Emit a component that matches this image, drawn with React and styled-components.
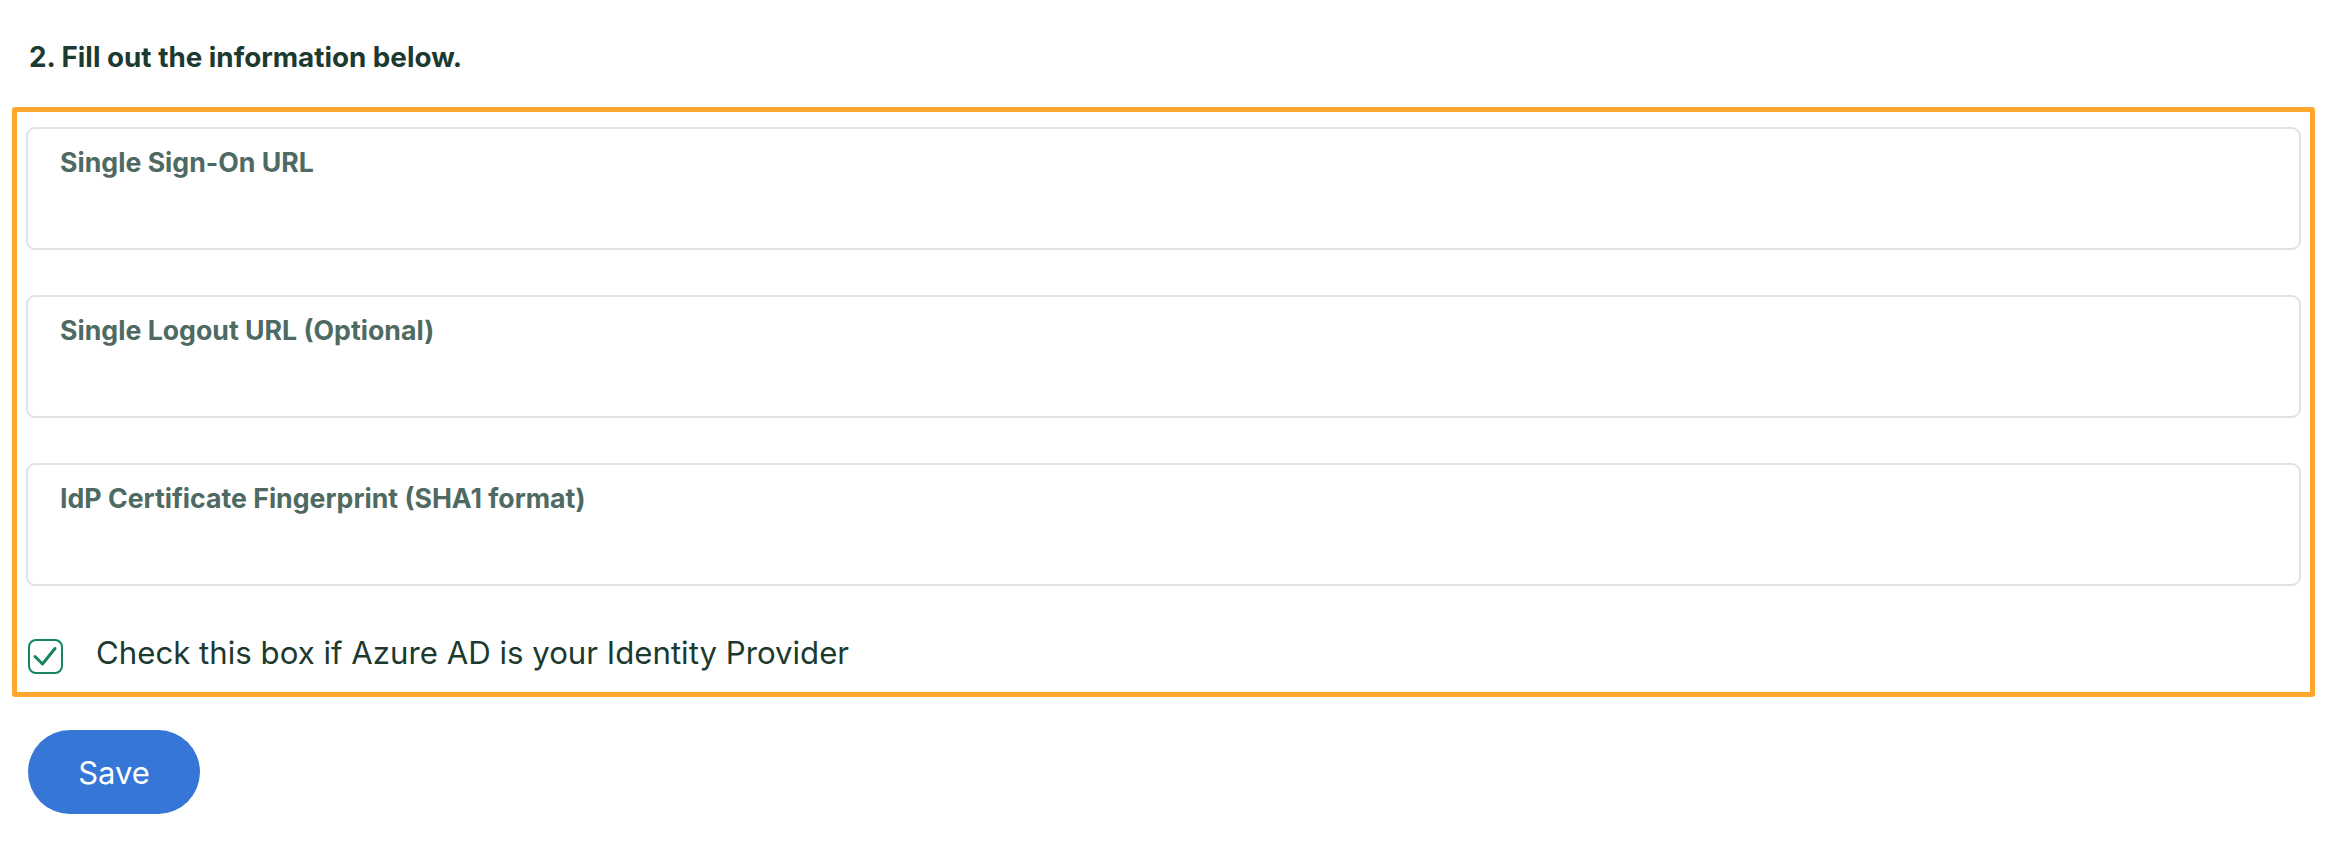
import React, { useState } from "react";
import styled, { createGlobalStyle } from "styled-components";

const GlobalStyle = createGlobalStyle`
    body {
        margin: 0;
        background: #ffffff;
        font-family: Inter, Roboto, "Liberation Sans", sans-serif;
    }
`;

const Page = styled.div`
    padding: 41px 15px 0 12px;
`;

const StepHeading = styled.h2`
    margin: 0 0 34px 17px;
    font-size: 27.8px;
    line-height: 32px;
    font-weight: 700;
    color: #1c3a2f;
`;

const Highlight = styled.div`
    border: 5px solid #ffa62f;
    border-radius: 3px;
    padding: 15px 9px 18px 9px;
    display: flex;
    flex-direction: column;
    gap: 45px;
`;

const Field = styled.label`
    display: flex;
    flex-direction: column;
    height: 123px;
    box-sizing: border-box;
    padding: 19px 32px 0 32px;
    border: 2px solid #dfe3e2;
    border-radius: 9px;
    background: #ffffff;
`;

const FieldLabel = styled.span`
    font-size: 26.7px;
    line-height: 29px;
    font-weight: 700;
    color: #4e6a62;
`;

const FieldInput = styled.input`
    flex: 1;
    border: 0;
    outline: none;
    background: transparent;
    font: inherit;
    font-size: 24px;
    color: #1c3a2f;
    padding: 0;
`;

const CheckRow = styled.label`
    display: flex;
    align-items: flex-start;
    gap: 33px;
    padding-left: 2px;
    margin-top: 4px;
    cursor: pointer;
`;

const CheckBox = styled.span`
    position: relative;
    width: 35px;
    height: 35px;
    margin-top: 4px;
    box-sizing: border-box;
    border: 2px solid ${({ checked }) => (checked ? "#16855f" : "#9aa8a3")};
    border-radius: 8px;
    flex-shrink: 0;

    svg {
        position: absolute;
        top: -2px;
        left: -2px;
    }
`;

const CheckText = styled.span`
    font-size: 31.2px;
    line-height: 36px;
    color: #1c3a2f;
`;

const SaveButton = styled.button`
    margin: 33px 0 0 16px;
    width: 172px;
    height: 84px;
    border: 0;
    border-radius: 42px;
    background: #3676d7;
    color: #ffffff;
    font-family: Inter, Roboto, "Liberation Sans", sans-serif;
    font-size: 31px;
    cursor: pointer;
`;

const FIELDS = [
    "Single Sign-On URL",
    "Single Logout URL (Optional)",
    "IdP Certificate Fingerprint (SHA1 format)",
];

const App = () => {
    const [isAzure, setAzure] = useState(true);

    return (
        <Page>
            <GlobalStyle />
            <StepHeading>2. Fill out the information below.</StepHeading>
            <Highlight>
                {FIELDS.map(name => (
                    <Field key={name}>
                        <FieldLabel>{name}</FieldLabel>
                        <FieldInput type="text" />
                    </Field>
                ))}
                <CheckRow onClick={() => setAzure(!isAzure)}>
                    <CheckBox checked={isAzure}>
                        {isAzure && (
                            <svg width="35" height="35" viewBox="0 0 35 35">
                                <polyline
                                    points="7,17.5 14.5,25 27,9.5"
                                    fill="none"
                                    stroke="#16855f"
                                    strokeWidth="3"
                                    strokeLinecap="round"
                                    strokeLinejoin="round"
                                />
                            </svg>
                        )}
                    </CheckBox>
                    <CheckText>Check this box if Azure AD is your Identity Provider</CheckText>
                </CheckRow>
            </Highlight>
            <SaveButton>Save</SaveButton>
        </Page>
    );
};

export default App;
